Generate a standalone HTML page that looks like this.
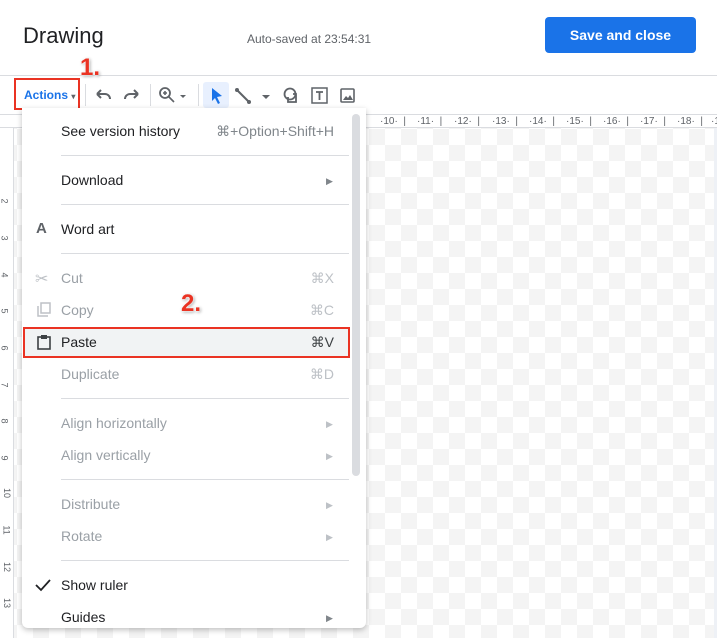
<!DOCTYPE html>
<html><head><meta charset="utf-8"><style>
*{margin:0;padding:0;box-sizing:border-box}
body{width:717px;height:638px;overflow:hidden;background:#fff;font-family:"Liberation Sans",Arial,sans-serif;position:relative}
.abs{position:absolute}
.canvas{left:14px;top:128px;width:700px;height:510px;
background:conic-gradient(#f4f4f4 25%,#fff 0 50%,#f4f4f4 0 75%,#fff 0);
background-size:32px 32px;background-position:3px 17px}
.menu{left:22px;top:108px;width:344px;height:520px;background:#fff;border-radius:0 0 6px 6px;box-shadow:0 2px 6px rgba(0,0,0,.25)}
.it{position:absolute;left:39px;font-size:14px;color:#202124}
.dis{color:#9aa0a6}
.sc{position:absolute;right:32px;font-size:14px;color:#80868b}
.sc.dis{color:#bdc1c6}
.arr{position:absolute;left:304px;font-size:9px;color:#80868b}
.sep{position:absolute;left:39px;width:288px;height:1px;background:#dadce0}
.red{border:2px solid #ea3323}
.num{color:#ea3323;font-weight:bold;font-size:24px;text-shadow:0 0 2px #fff,0 0 2px #fff,1px 1px 3px #888}
.rn{position:absolute;top:116px;font-size:10px;color:#5f6368}
.lr{position:absolute;left:2px;font-size:9px;color:#5f6368;transform:rotate(90deg)}
</style></head><body>
<div class="abs" style="left:23px;top:23px;font-size:22px;color:#202124">Drawing</div>
<div class="abs" style="left:247px;top:32px;font-size:12px;color:#5f6368">Auto-saved at 23:54:31</div>
<div class="abs" style="left:545px;top:17px;width:151px;height:36px;background:#1a73e8;border-radius:4px;color:#fff;font-size:14px;font-weight:bold;text-align:center;line-height:36px">Save and close</div>
<div class="abs" style="left:0;top:75px;width:717px;height:1px;background:#dadce0"></div>
<div class="abs num" style="left:80px;top:54px">1.</div>
<div class="abs red" style="left:14px;top:78px;width:66px;height:32px"></div>
<div class="abs" style="left:24px;top:88px;font-size:12px;color:#1a73e8;font-weight:bold">Actions <span style="font-size:8px;color:#5f6368">▾</span></div>
<div class="abs" style="left:85px;top:84px;width:1px;height:22px;background:#dadce0"></div>
<svg class="abs" style="left:93px;top:86px" width="50" height="18"><path d="M4 8h8a5 5 0 0 1 5 5M4 8l4-4M4 8l4 4" stroke="#5f6368" stroke-width="2" fill="none"/><path d="M45 8h-8a5 5 0 0 0-5 5M45 8l-4-4M45 8l-4 4" stroke="#5f6368" stroke-width="2" fill="none"/></svg>
<div class="abs" style="left:150px;top:84px;width:1px;height:22px;background:#dadce0"></div>
<svg class="abs" style="left:158px;top:86px" width="34" height="18"><circle cx="7" cy="7" r="5" stroke="#5f6368" stroke-width="1.8" fill="none"/><path d="M11 11l5 5M5 7h4M7 5v4" stroke="#5f6368" stroke-width="1.6"/><path d="M22 9h6l-3 3z" fill="#5f6368"/></svg>
<div class="abs" style="left:198px;top:84px;width:1px;height:22px;background:#dadce0"></div>
<div class="abs" style="left:203px;top:82px;width:26px;height:26px;background:#e8f0fe;border-radius:3px"></div>
<svg class="abs" style="left:208px;top:86px" width="150" height="20"><path d="M4 2l10 8-5 1 3 6-2 1-3-6-3 3z" fill="#1a73e8"/><path d="M29 4l12 12" stroke="#5f6368" stroke-width="2"/><circle cx="29" cy="4" r="2" fill="#5f6368"/><circle cx="41" cy="16" r="2" fill="#5f6368"/><path d="M54 9h8l-4 4z" fill="#5f6368"/><circle cx="82" cy="8" r="5.5" stroke="#5f6368" stroke-width="1.8" fill="none"/><path d="M80 11v5h8v-8h-3" stroke="#5f6368" stroke-width="1.8" fill="none"/><rect x="104" y="2" width="15" height="15" stroke="#5f6368" stroke-width="1.5" fill="none"/><path d="M108 6h7M111.5 6v8" stroke="#5f6368" stroke-width="1.8"/><rect x="133" y="3" width="13" height="13" rx="1" stroke="#5f6368" stroke-width="1.6" fill="none"/><path d="M135 14l3-4 2 2 2-3 3 5z" fill="#5f6368"/></svg>
<div class="abs" style="left:0;top:114px;width:717px;height:14px;background:#fff;border-top:1px solid #dadce0;border-bottom:1px solid #dadce0"></div>
<div class="rn" style="left:380px">·10·&nbsp;&nbsp;|</div>
<div class="rn" style="left:417px">·11·&nbsp;&nbsp;|</div>
<div class="rn" style="left:454px">·12·&nbsp;&nbsp;|</div>
<div class="rn" style="left:492px">·13·&nbsp;&nbsp;|</div>
<div class="rn" style="left:529px">·14·&nbsp;&nbsp;|</div>
<div class="rn" style="left:566px">·15·&nbsp;&nbsp;|</div>
<div class="rn" style="left:603px">·16·&nbsp;&nbsp;|</div>
<div class="rn" style="left:640px">·17·&nbsp;&nbsp;|</div>
<div class="rn" style="left:677px">·18·&nbsp;&nbsp;|</div>
<div class="rn" style="left:711px">·19</div>
<div class="abs" style="left:0;top:128px;width:14px;height:510px;background:#fff;border-right:1px solid #dadce0"></div>
<div class="abs canvas"></div>
<div class="abs" style="left:714px;top:128px;width:3px;height:510px;background:#eef1f6"></div>
<div class="lr" style="top:196px">2</div>
<div class="lr" style="top:233px">3</div>
<div class="lr" style="top:270px">4</div>
<div class="lr" style="top:306px">5</div>
<div class="lr" style="top:343px">6</div>
<div class="lr" style="top:380px">7</div>
<div class="lr" style="top:416px">8</div>
<div class="lr" style="top:453px">9</div>
<div class="lr" style="top:488px">10</div>
<div class="lr" style="top:525px">11</div>
<div class="lr" style="top:562px">12</div>
<div class="lr" style="top:598px">13</div>
<div class="abs menu">
<div class="abs" style="left:330px;top:6px;width:8px;height:362px;background:#dadce0;border-radius:4px"></div>
<div class="it" style="top:15px">See version history</div><div class="sc" style="top:15px">⌘+Option+Shift+H</div>
<div class="sep" style="top:47px"></div>
<div class="it" style="top:64px">Download</div><div class="arr" style="top:68px">▶</div>
<div class="sep" style="top:96px"></div>
<div class="abs" style="left:14px;top:112px;font-weight:bold;font-size:15px;color:#5f6368">A</div>
<div class="it" style="top:113px">Word art</div>
<div class="sep" style="top:145px"></div>
<div class="abs" style="left:13px;top:161px;font-size:16px;color:#bdc1c6">✂</div>
<div class="it dis" style="top:162px">Cut</div><div class="sc dis" style="top:162px">⌘X</div>
<svg class="abs" style="left:14px;top:194px" width="16" height="16"><path d="M2 4v10h10" stroke="#bdc1c6" stroke-width="1.5" fill="none"/><rect x="5" y="1" width="9" height="10" stroke="#bdc1c6" stroke-width="1.5" fill="none"/></svg>
<div class="it dis" style="top:194px">Copy</div><div class="sc dis" style="top:194px">⌘C</div>
<div class="abs" style="left:2px;top:219px;width:325px;height:30px;background:#f1f3f4"></div>
<svg class="abs" style="left:14px;top:226px" width="16" height="16"><rect x="2" y="3" width="12" height="12" stroke="#3c4043" stroke-width="1.6" fill="none"/><rect x="5" y="1" width="6" height="4" fill="#3c4043"/></svg>
<div class="it" style="top:226px">Paste</div><div class="sc" style="top:226px;color:#3c4043">⌘V</div>
<div class="it dis" style="top:258px">Duplicate</div><div class="sc dis" style="top:258px">⌘D</div>
<div class="sep" style="top:290px"></div>
<div class="it dis" style="top:307px">Align horizontally</div><div class="arr" style="top:311px;color:#bdc1c6">▶</div>
<div class="it dis" style="top:339px">Align vertically</div><div class="arr" style="top:343px;color:#bdc1c6">▶</div>
<div class="sep" style="top:371px"></div>
<div class="it dis" style="top:388px">Distribute</div><div class="arr" style="top:392px;color:#bdc1c6">▶</div>
<div class="it dis" style="top:420px">Rotate</div><div class="arr" style="top:424px;color:#bdc1c6">▶</div>
<div class="sep" style="top:452px"></div>
<svg class="abs" style="left:13px;top:470px" width="16" height="14"><path d="M1 7l5 5L15 2" stroke="#202124" stroke-width="1.8" fill="none"/></svg>
<div class="it" style="top:469px">Show ruler</div>
<div class="it" style="top:501px">Guides</div><div class="arr" style="top:505px">▶</div>
</div>
<div class="abs red" style="left:23px;top:327px;width:327px;height:31px"></div>
<div class="abs num" style="left:181px;top:290px">2.</div>
</body></html>
